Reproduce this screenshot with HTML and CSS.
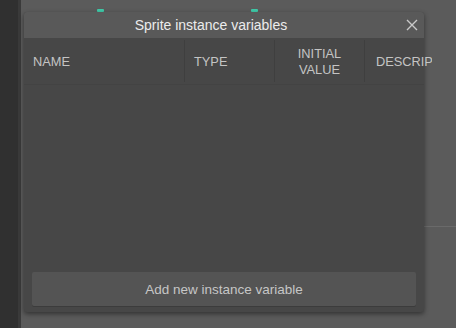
FILE: index.html
```html
<!DOCTYPE html>
<html lang="en">
<head>
  <meta charset="UTF-8">
  <title>Sprite instance variables</title>
  <link rel="stylesheet" href="styles.css">
</head>
<body>
  <div class="sidebar"></div>
  <div class="workspace">
    <span class="handle h1"></span>
    <span class="handle h2"></span>
    <span class="guide"></span>
  </div>

  <div class="dialog">
    <div class="dialog-title">
      Sprite instance variables
      <span class="close">
        <svg width="12" height="12" viewBox="0 0 12 12"><path d="M1 1L11 11M11 1L1 11" stroke="#c9c9c9" stroke-width="1.4" fill="none"/></svg>
      </span>
    </div>
    <div class="table-head">
      <div class="col col-name">NAME</div>
      <div class="col col-type">TYPE</div>
      <div class="col col-init">INITIAL<br>VALUE</div>
      <div class="col col-desc">DESCRIPTION</div>
    </div>
    <div class="table-body"></div>
    <div class="dialog-foot">
      <button class="add-btn">Add new instance variable</button>
    </div>
  </div>
</body>
</html>
```

FILE: styles.css
```css
body { margin: 0; background: #5b5b5b; font-family: "Liberation Sans", Arial, sans-serif; width: 456px; height: 328px; overflow: hidden; display: flex; }
.sidebar { width: 18px; height: 328px; background: #303030; border-right: 3px solid #3a3a3a; flex: none; }
.workspace { flex: 1; position: relative; }
.handle { position: absolute; top: 9px; width: 7px; height: 3px; border-radius: 1px; background: #3fcaa8; }
.h1 { left: 76px; }
.h2 { left: 230px; }
.guide { position: absolute; right: 0; top: 226px; width: 32px; height: 1px; background: #6a6a6a; }

.dialog { position: absolute; left: 24px; top: 12px; width: 400px; height: 300px; background: #474747; border-radius: 3px; box-shadow: 0 2px 5px rgba(0,0,0,0.45); display: flex; flex-direction: column; }
.dialog-title { height: 26px; background: #595959; color: #ececec; font-size: 14px; display: flex; align-items: center; justify-content: center; padding-right: 26px; position: relative; border-radius: 3px 3px 0 0; }
.close { position: absolute; right: 6px; top: 7px; width: 12px; height: 12px; }
.close svg { display: block; }

.table-head { display: flex; height: 46px; color: #c4c4c4; font-size: 12.8px; border-bottom: 1px solid #434343; }
.col { display: flex; align-items: center; border-right: 1px solid #3f3f3f; margin: 2px 0; padding-top: 2px; line-height: 16px; flex: none; box-sizing: border-box; }
.col-name { width: 161px; padding-left: 9px; }
.col-type { width: 90px; padding-left: 9px; }
.col-init { width: 90px; justify-content: center; text-align: center; }
.col-desc { width: 67px; padding-left: 11px; border-right: none; overflow: hidden; white-space: nowrap; }

.table-body { flex: 1; }
.dialog-foot { padding: 0 8px 6px; }
.add-btn { width: 100%; height: 34px; border: none; border-radius: 2px; background: #545454; color: #c6c6c6; font-family: "Liberation Sans", Arial, sans-serif; font-size: 13.5px; box-shadow: 0 1px 0 #3c3c3c; }
```
